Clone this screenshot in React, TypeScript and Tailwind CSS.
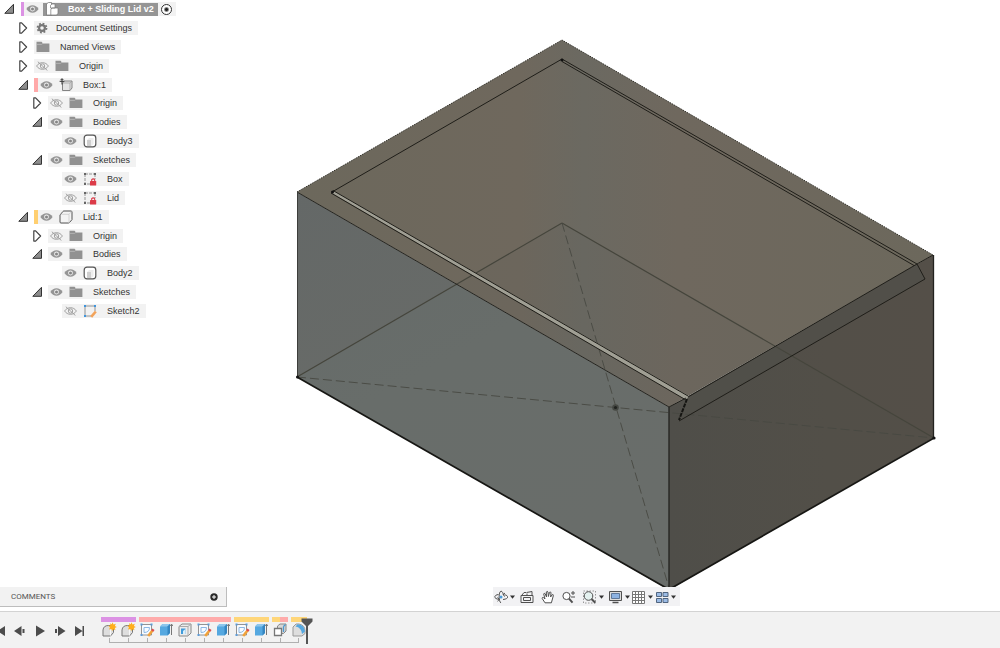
import type { ReactNode } from "react";

type Kind = "doc" | "gear" | "folder" | "component" | "part" | "body" | "locked" | "sketch";

type TreeNode = {
  label: string;
  kind: Kind;
  level: number;
  open?: boolean;
  visible?: boolean;
  color?: "pink" | "yellow";
};

const tree: TreeNode[] = [
  { label: "Document Settings", kind: "gear", level: 1, open: false },
  { label: "Named Views", kind: "folder", level: 1, open: false },
  { label: "Origin", kind: "folder", level: 1, open: false, visible: false },
  { label: "Box:1", kind: "component", level: 1, open: true, visible: true, color: "pink" },
  { label: "Origin", kind: "folder", level: 2, open: false, visible: false },
  { label: "Bodies", kind: "folder", level: 2, open: true, visible: true },
  { label: "Body3", kind: "body", level: 3, visible: true },
  { label: "Sketches", kind: "folder", level: 2, open: true, visible: true },
  { label: "Box", kind: "locked", level: 3, visible: true },
  { label: "Lid", kind: "locked", level: 3, visible: false },
  { label: "Lid:1", kind: "part", level: 1, open: true, visible: true, color: "yellow" },
  { label: "Origin", kind: "folder", level: 2, open: false, visible: false },
  { label: "Bodies", kind: "folder", level: 2, open: true, visible: true },
  { label: "Body2", kind: "body", level: 3, visible: true },
  { label: "Sketches", kind: "folder", level: 2, open: true, visible: true },
  { label: "Sketch2", kind: "sketch", level: 3, visible: false },
];

const indent: Record<number, string> = {
  0: "pl-[4px]",
  1: "pl-[18px]",
  2: "pl-[32px]",
  3: "pl-[46px]",
};

function Arrow({ open }: { open: boolean }) {
  return (
    <svg viewBox="0 0 12 12" className="w-[12px] h-[12px]">
      {open ? (
        <path d="M9.500 1.300V10.300H0.800Z" fill="#8d8d8d" stroke="#333" strokeWidth="1" strokeLinejoin="round" />
      ) : (
        <path d="M1.800 0.900H3.600L8.600 6L3.600 11.100H1.800Z" fill="#fff" stroke="#444" strokeWidth="1.200" strokeLinejoin="round" />
      )}
    </svg>
  );
}

function Eye({ on }: { on: boolean }) {
  return (
    <svg viewBox="0 0 13 10" className="w-[13px] h-[10px]">
      {on ? (
        <>
          <path d="M0.400 5C3.200 0.100 9.800 0.100 12.600 5C9.800 9.900 3.200 9.900 0.400 5Z" fill="#959595" />
          <circle cx="6.500" cy="5" r="2.400" fill="#ededed" />
          <circle cx="6.500" cy="5" r="1.500" fill="#858585" />
        </>
      ) : (
        <g fill="none" stroke="#999" strokeWidth="0.900">
          <path d="M0.600 5C3.300 0.600 9.700 0.600 12.400 5C9.700 9.400 3.300 9.400 0.600 5Z" />
          <circle cx="6.500" cy="5" r="2.200" />
          <path d="M1.800 0.700L11.400 9.500" />
        </g>
      )}
    </svg>
  );
}

function NodeIcon({ kind }: { kind: Kind }) {
  if (kind === "gear") {
    return (
      <svg viewBox="0 0 14 14" className="w-[14px] h-[14px]">
        <circle cx="6" cy="7" r="4.500" fill="none" stroke="#777" strokeWidth="1.800" strokeDasharray="1.800 1.734" />
        <circle cx="6" cy="7" r="2.900" fill="none" stroke="#777" strokeWidth="2.200" />
      </svg>
    );
  }
  if (kind === "folder") {
    return (
      <svg viewBox="0 0 14 14" className="w-[14px] h-[14px]">
        <path d="M0.500 1.800H5.600L7 3.500H13.400V12H0.500Z" fill="#919191" />
        <path d="M0.500 4.400H5.600L7 3.200" fill="none" stroke="#c2c2c2" strokeWidth="0.700" />
      </svg>
    );
  }
  if (kind === "doc") {
    return (
      <svg viewBox="0 0 14 14" className="w-[14px] h-[14px]">
        <path d="M1.500 2L3.400 0.500H6.500V13H1.500Z" fill="#fff" stroke="#6f6f6f" strokeWidth="0.700" />
        <path d="M5.500 3.300L7 2H10V6H5.500ZM5.800 7.300L7.500 6H13V11.300L11.600 13H5.800Z" fill="#fff" stroke="#777" strokeWidth="0.700" strokeLinejoin="round" />
      </svg>
    );
  }
  if (kind === "component") {
    return (
      <svg viewBox="0 0 14 14" className="w-[14px] h-[14px]">
        <path d="M3.500 4.800L5.500 3H13V10L11 12.500H3.500Z" fill="#e4e4e4" stroke="#777" strokeWidth="0.900" strokeLinejoin="round" />
        <path d="M3.500 5H11V12.500M11 5L13 3" fill="none" stroke="#999" strokeWidth="0.700" />
        <path d="M3 6.500V1M0.600 3.300H5.400M1.700 2L3 0.600L4.300 2" fill="none" stroke="#333" strokeWidth="1" />
      </svg>
    );
  }
  if (kind === "part") {
    return (
      <svg viewBox="0 0 14 14" className="w-[14px] h-[14px]">
        <path d="M1 5L4 1.400Q4.400 1 5 1H12Q13 1 13 2V9.600L10.400 12.600Q10 13 9.400 13H2Q1 13 1 12Z" fill="#f4f4f4" stroke="#555" strokeWidth="1" />
        <path d="M1.500 4.300H10V12.800M10 4.300L12.700 1.500" fill="none" stroke="#cbcbcb" strokeWidth="0.800" />
      </svg>
    );
  }
  if (kind === "body") {
    return (
      <svg viewBox="0 0 14 14" className="w-[14px] h-[14px]">
        <rect x="1.200" y="1.200" width="11.600" height="11.600" rx="2.800" fill="#fff" stroke="#555" strokeWidth="1.200" />
        <path d="M4 6H8.200V12H4Z" fill="#cfcfcf" />
        <path d="M4 6L6 4H10.500L8.200 6ZM8.200 6L10.500 4V10L8.200 12Z" fill="#ececec" />
      </svg>
    );
  }
  const locked = kind === "locked";
  return (
    <svg viewBox="0 0 14 14" className="w-[14px] h-[14px]">
      <path d="M2 2H12M2 2V12H8M12 2V7" fill="none" stroke="#888" strokeWidth="0.900" strokeDasharray={locked ? "3 1" : undefined} />
      <path d="M1 1H3V3H1ZM11 1H13V3H11ZM1 11H3V13H1Z" fill={locked ? "#666" : "#3f95dc"} />
      {locked ? (
        <>
          <rect x="7" y="9" width="6.200" height="4.500" rx="0.600" fill="#dc3b48" />
          <path d="M8.700 9V7.700Q10.200 6 11.700 7.700V9" fill="none" stroke="#dc3b48" strokeWidth="1.100" />
        </>
      ) : (
        <path d="M12.800 7.500L8.200 12.800" stroke="#f2a35a" strokeWidth="2.600" />
      )}
    </svg>
  );
}

function TreeRow({ node }: { node: TreeNode }) {
  const hasEye = node.visible !== undefined;
  return (
    <li className={`flex h-[14px] items-center ${indent[node.level]}`}>
      <div className="w-[16px] shrink-0">
        {node.open !== undefined && (
          <button type="button" aria-label={`Toggle ${node.label}`} className="block">
            <Arrow open={node.open} />
          </button>
        )}
      </div>
      {node.color === "pink" && <span className="h-[14px] w-[4px] bg-[#ffa9a9]" />}
      {node.color === "yellow" && <span className="h-[14px] w-[4px] bg-[#ffcf70]" />}
      <div className="flex h-[14px] items-center bg-[#f2f2f2] pl-[2px] pr-[6px]">
        {hasEye && (
          <button type="button" aria-label={`Visibility of ${node.label}`} className="mr-[6px]">
            <Eye on={node.visible === true} />
          </button>
        )}
        <NodeIcon kind={node.kind} />
        <span className={`whitespace-nowrap ${node.kind === "gear" ? "pl-[6px]" : "pl-[10px]"}`}>{node.label}</span>
      </div>
    </li>
  );
}

function Browser() {
  return (
    <nav aria-label="Browser" className="relative w-[220px] pt-[2px] text-[9px] leading-[14px] text-[#333]">
      <ul className="flex h-[316px] flex-col justify-between">
        <li className={`flex h-[14px] items-center ${indent[0]}`}>
          <button type="button" aria-label="Toggle document" className="w-[17px] shrink-0">
            <Arrow open />
          </button>
          <span className="h-[14px] w-[3px] bg-[#dc92e4]" />
          <div className="flex h-[14px] items-center bg-[#f2f2f2] pl-[2px] pr-[4px]">
            <button type="button" aria-label="Visibility of document" className="mr-[4px]">
              <Eye on />
            </button>
            <div className="flex h-[13px] items-center bg-[#959595] pl-[2px] pr-[4px] font-bold text-white">
              <NodeIcon kind="doc" />
              <span className="pl-[9px] whitespace-nowrap">Box + Sliding Lid v2</span>
            </div>
            <input
              type="radio"
              defaultChecked
              aria-label="Activate document"
              className="ml-[3px] h-[11px] w-[11px] appearance-none rounded-full border border-[#333] bg-[radial-gradient(circle,#222_1px,#fff_3px)]"
            />
          </div>
        </li>
        {tree.map((node, i) => (
          <TreeRow key={i} node={node} />
        ))}
      </ul>
    </nav>
  );
}

function Model() {
  return (
    <svg viewBox="0 0 1000 611" className="absolute inset-0 h-full w-full" role="img" aria-label="Box with sliding lid">
      <defs>
        <linearGradient id="top" x1="0" y1="0" x2="1" y2="0">
          <stop offset="0" stopColor="#6c685c" />
          <stop offset="0.350" stopColor="#6f685d" />
          <stop offset="0.450" stopColor="#6b6961" />
          <stop offset="0.600" stopColor="#6f685e" />
          <stop offset="1" stopColor="#6c685c" />
        </linearGradient>
        <linearGradient id="left" x1="0" y1="0" x2="0.500" y2="1">
          <stop offset="0" stopColor="#646867" />
          <stop offset="0.500" stopColor="#686b68" />
          <stop offset="1" stopColor="#696b68" />
        </linearGradient>
        <linearGradient id="right" x1="0" y1="0" x2="1" y2="0">
          <stop offset="0" stopColor="#504e49" />
          <stop offset="0.600" stopColor="#534f48" />
          <stop offset="1" stopColor="#544f48" />
        </linearGradient>
      </defs>

      {/* outer faces */}
      <path d="M562 40L933 255L669 407L297 192Z" fill="url(#top)" />
      <path d="M297 192L669 407V590L297 377Z" fill="url(#left)" />
      <path d="M669 407L933 255V438L669 590Z" fill="url(#right)" />

      {/* front end of the lid */}
      <path d="M688 397L917 264L925 279L679 420Z" fill="#514f49" />

      {/* sketch plane seen through the body */}
      <path d="M562 223L934 438L669 588L297 377Z" fill="#4a5350" fillOpacity="0.060" />
      <path d="M456 284L669 407V588L297 377Z" fill="#7c8784" fillOpacity="0.140" />
      <path d="M562 223L934 438M562 223L297 377" fill="none" stroke="#45453c" strokeWidth="1.200" />
      <path
        d="M562 223L669 588M297 377L934 438"
        fill="none"
        stroke="#474842"
        strokeWidth="0.900"
        strokeDasharray="9 4"
      />

      {/* groove beside the lid */}
      <path d="M334 191L689 396L686 400L332 193Z" fill="#a09f94" />
      <g fill="none" stroke="#1f1e19" strokeWidth="1">
        <path d="M333 190.500L688 396M331 193L686 400" />
        <path d="M332 192L562 59L917 264" />
        <path d="M562 61.500L914 265.500" />
        <path d="M688 397L917 264L925 279L679 421" />
        <path d="M669 407L686 398M917 264L933 255" />
      </g>
      <path d="M687 399L679 420" stroke="#151512" strokeWidth="2" strokeDasharray="4 1" />
      <circle cx="332.500" cy="192" r="1.500" fill="#111" />
      <circle cx="562" cy="60" r="1.500" fill="#111" />

      <path d="M297 192L562 40L933 255" fill="none" stroke="#33322b" strokeWidth="1" strokeDasharray="1.500 1" />
      <path d="M297 192L669 407" fill="none" stroke="#24231e" strokeWidth="1" />
      <path d="M297.500 192V377" fill="none" stroke="#3d3e3b" strokeWidth="1" />
      <path d="M669 407V590M933.500 255V438" fill="none" stroke="#22221f" strokeWidth="1.300" />
      <path d="M297 377L669 589.500L934 438" fill="none" stroke="#171714" strokeWidth="1.700" />
      <circle cx="297.500" cy="377" r="1.500" fill="#111" />
      <circle cx="934" cy="438" r="1.600" fill="#111" />
      <circle cx="615.500" cy="407.500" r="3.300" fill="#454843" />
      <circle cx="615.500" cy="407.500" r="1.600" fill="#20221f" />
    </svg>
  );
}

function Tool({ label, menu, children }: { label: string; menu?: boolean; children: ReactNode }) {
  return (
    <button type="button" aria-label={label} className="flex items-center gap-[2px]">
      <svg viewBox="0 0 14 14" className="h-[14px] w-[14px]" fill="none" stroke="#505050" strokeWidth="1">
        {children}
      </svg>
      {menu && (
        <svg viewBox="0 0 5 4" className="h-[4px] w-[5px]">
          <path d="M0 0.500H5L2.500 3.800Z" fill="#333" />
        </svg>
      )}
    </button>
  );
}

function ViewTools() {
  return (
    <div className="flex h-[19px] items-center gap-[5px] bg-[#f2f2f4] pl-[1px] pr-[4px]">
      <Tool label="Orbit" menu>
        <path d="M7 1C4.500 2 4.500 11.500 7 13M7 1C8.500 1.500 9.300 3.500 9.300 5" />
        <path d="M4.500 4.500C-0.500 5 -0.500 9 5 9.300M9 9.500C15 9 15 5.500 10.500 4.700" />
        <path d="M3.500 7.500L5.500 9.300L3.500 11.200M11 3L9 4.700L11 6.500" />
        <circle cx="7" cy="7" r="1.500" fill="#4c9bd8" stroke="none" />
      </Tool>
      <div className="flex items-center gap-[7px]">
        <Tool label="Look at">
          <path d="M1 5.500H13V12.500H1ZM3.500 7.500H10.500V10.500H3.500ZM2 5L4 2.500H6M6.500 2.500L12 1.500V5M7 5V3.500" />
        </Tool>
        <Tool label="Pan">
          <path
            d="M4 12.800L1.200 8.500Q1 7 2.500 7.600L4 9L2.700 4Q3 2.600 4.200 3.800L5.500 7L5.300 2Q6 0.500 7 2L7.400 6.500L8.500 2.300Q9.700 1.300 10 2.900L9.600 7L11.200 4.600Q12.700 4.300 12.300 5.800L10.400 12.800Z"
            fill="#fff"
            strokeWidth="1"
          />
        </Tool>
        <Tool label="Zoom">
          <circle cx="4.500" cy="6" r="3.600" fill="#fff" />
          <path d="M7 8.700L10.500 12.600" strokeWidth="2" />
          <path d="M9 3H13M11 1V5M9 7H13" />
        </Tool>
        <Tool label="Fit" menu>
          <path d="M0.500 1H12.500V13H0.500Z" stroke="#999" strokeDasharray="1.500 1.500" />
          <circle cx="5.500" cy="6" r="4.300" fill="#e4f1ef" />
          <path d="M8.500 9L12.300 12.800" strokeWidth="2" />
        </Tool>
      </div>
      <div className="flex items-center gap-[2px]">
        <Tool label="Display settings" menu>
          <path d="M0.500 1.500H12.500V10.500H0.500Z" fill="#ddd" />
          <path d="M2.500 3.500H10.500V8.500H2.500Z" fill="#8eb3e2" stroke="#5f7899" />
          <path d="M3.500 12.500H9.500" strokeWidth="1.500" />
        </Tool>
        <Tool label="Grid and snaps" menu>
          <path d="M0.500 1.500H12.500V13.500H0.500ZM3.500 1.500V13.500M6.500 1.500V13.500M9.500 1.500V13.500M0.500 4.500H12.500M0.500 7.500H12.500M0.500 10.500H12.500" stroke="#777" fill="#fff" />
        </Tool>
        <Tool label="Viewports" menu>
          <path d="M1.500 2.500H6.500V6.500H1.500ZM8 2.500H13V6.500H8ZM1.500 8.500H6.500V12.500H1.500ZM8 8.500H13V12.500H8Z" fill="#9bbbe5" stroke="#51657f" />
        </Tool>
      </div>
    </div>
  );
}

type Feature = "component" | "sketch" | "extrude" | "shell" | "combine" | "fillet";

const groups: { bar: string; features: Feature[] }[] = [
  { bar: "bg-[#dc92e4]", features: ["component", "component"] },
  { bar: "bg-[#ffabab]", features: ["sketch", "extrude", "shell", "sketch", "extrude"] },
  { bar: "bg-[#ffd679]", features: ["sketch", "extrude"] },
  { bar: "bg-[linear-gradient(90deg,#ffd679_50%,#ffabab_50%)]", features: ["combine"] },
  { bar: "bg-[#ffd679]", features: ["fillet"] },
];

function FeatureIcon({ type }: { type: Feature }) {
  return (
    <svg viewBox="0 0 16 16" className="h-[16px] w-[16px]">
      {type === "component" && (
        <>
          <path d="M2 14V8Q2.500 3.500 7.500 3.500H12.500V10.500L9.500 14Z" fill="#dedede" stroke="#777" />
          <path d="M9.500 13.500V8L12 5" stroke="#f8f8f8" fill="none" />
          <path d="M11.500 0.300L12.500 2.500L14.800 1.700L13.900 4L15.800 5L13.800 6L14.500 8.200L12.300 7.300L11.200 9L10.300 7L8 7.500L9 5.300L7.300 4L9.500 3.300L9 1.300L10.800 2.200Z" fill="#ffae1c" />
        </>
      )}
      {type === "sketch" && (
        <>
          <path d="M2.500 2.500H12.500V13H2.500Z" fill="#f8fbff" stroke="#888" strokeWidth="0.900" />
          <path d="M5 5.500H10.500Q10.500 10.500 5 10.500Z" fill="none" stroke="#8cb8e4" />
          <path d="M1.500 1.500H3.500V3.500H1.500ZM11.500 1.500H13.500V3.500H11.500ZM1.500 12H3.500V14H1.500Z" fill="#5c9bd8" />
          <path d="M13.500 8.500L9.200 14" stroke="#f0a23b" strokeWidth="2.600" />
          <path d="M14.500 7.300L13.200 9" stroke="#de4c50" strokeWidth="2.600" />
        </>
      )}
      {type === "extrude" && (
        <>
          <path d="M2 4.500L4.500 2H12V11L9.500 13.500H2Z" fill="#55a8e0" />
          <path d="M2 4.500L4.500 2H12L9.500 4.500Z" fill="#8ec6ec" />
          <path d="M9.500 4.500L12 2V11L9.500 13.500Z" fill="#3586c1" />
          <path d="M13.500 13V2.500M12.400 4L13.500 2L14.700 4" fill="none" stroke="#777" />
        </>
      )}
      {type === "shell" && (
        <>
          <path d="M2 4.500L5 2H14V11L11 14H2Z" fill="#ececec" stroke="#888" />
          <path d="M2 4.500H11V14M11 4.500L14 2" fill="none" stroke="#aaa" />
          <path d="M4 6.500H8.500V12H4Z" fill="#409bda" />
          <path d="M6 9L8.500 7V12H6Z" fill="#d9edf9" />
        </>
      )}
      {type === "combine" && (
        <>
          <path d="M5.500 4L8 2H14V9L11.500 11.500H5.500Z" fill="#d8d8d8" stroke="#888" />
          <path d="M11.500 4.500V10M11.500 4.500L13.500 2.500" stroke="#4d98d0" strokeWidth="1.300" fill="none" />
          <path d="M2.500 6.500H9.500V13.500H2.500Z" fill="#fff" stroke="#777" strokeWidth="1.300" />
        </>
      )}
      {type === "fillet" && (
        <>
          <path d="M2 14V5L5 2H8Q14 3 14 9V11.500L11 14Z" fill="#dedede" stroke="#999" />
          <path d="M6.500 2.300Q13.500 2.500 14 9.500L11 12Q10.500 5.500 4.500 4.500Z" fill="#55a8e0" />
        </>
      )}
    </svg>
  );
}

const playback = [
  { label: "Go to start", d: "M13 3V13L5.500 8ZM3.500 3H5V13H3.500Z" },
  { label: "Step back", d: "M9.500 3V13L2 8ZM10.500 6H12.500V10H10.500Z" },
  { label: "Play", d: "M4 2.500L13 8L4 13.500Z" },
  { label: "Step forward", d: "M6 3V13L13.500 8ZM3 6H5V10H3Z" },
  { label: "Go to end", d: "M3 3V13L10.500 8ZM10.500 3H12V13H10.500Z" },
];

function Timeline() {
  return (
    <footer className="flex h-[37px] shrink-0 border-t border-[#d3d3d3] bg-[#f2f2f2]">
      <div className="-ml-[8px] flex h-[37px] w-[109px] shrink-0 items-center gap-[4px]">
        {playback.map((p) => (
          <button key={p.label} type="button" aria-label={p.label}>
            <svg viewBox="0 0 16 16" className="h-[16px] w-[16px]">
              <path d={p.d} fill="#4c4c4c" />
            </svg>
          </button>
        ))}
      </div>
      <div className="pt-[5px]">
        <div className="flex gap-[3px]">
          {groups.map((g, i) => (
            <div key={i}>
              <div className={`h-[5px] ${g.bar}`} />
              <div className="flex gap-[3px]">
                {g.features.map((f, j) => (
                  <button key={j} type="button" aria-label={f}>
                    <FeatureIcon type={f} />
                  </button>
                ))}
              </div>
            </div>
          ))}
        </div>
        <div className="flex pl-[8px]">
          {Array.from({ length: 10 }, (_, i) => (
            <span key={i} className="h-[5px] w-[19px] border-b border-l border-[#b0b0b0] last:border-r" />
          ))}
        </div>
      </div>
      {/* history marker, overlaps the last feature */}
      <svg viewBox="0 0 12 27" className="relative -ml-[6px] mt-[6px] h-[27px] w-[12px]">
        <path d="M0.500 0.500H11.500V3.500L7 8V26H5V8L0.500 3.500Z" fill="#555" />
      </svg>
    </footer>
  );
}

export default function App() {
  return (
    <div className="flex h-screen flex-col overflow-hidden bg-white font-['Liberation_Sans',Arial,sans-serif]">
      <main className="relative flex min-h-0 flex-1 flex-col justify-between">
        <Model />
        <Browser />
        <div className="relative flex items-start gap-[266px] pb-[4px]">
          <section className="flex h-[20px] w-[227px] shrink-0 items-center justify-between border-r border-b border-[#bdbdbd] bg-[#f2f2f2] pl-[11px] pr-[8px]">
            <h2 className="font-['Roboto',sans-serif] text-[8px] text-[#555]">COMMENTS</h2>
            <button type="button" aria-label="Add comment">
              <svg viewBox="0 0 8 8" className="h-[8px] w-[8px]">
                <circle cx="4" cy="4" r="3.700" fill="#292929" />
                <path d="M4 2V6M2 4H6" stroke="#fff" strokeWidth="1" />
              </svg>
            </button>
          </section>
          <ViewTools />
        </div>
      </main>
      <Timeline />
    </div>
  );
}
